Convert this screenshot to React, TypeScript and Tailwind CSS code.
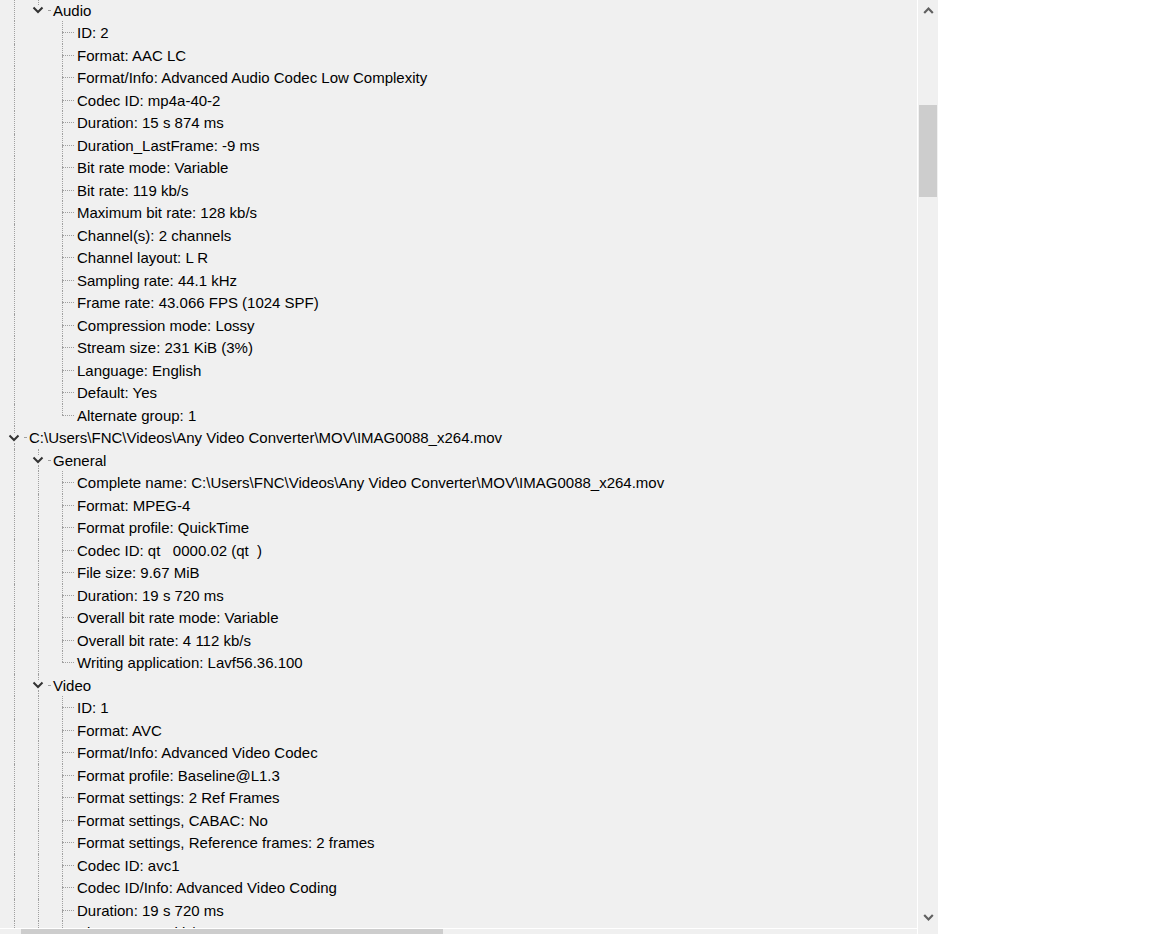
import React from 'react'

type Row = {
  text: string
  guides: boolean[]
  node?: boolean
  last?: boolean
}

const audioLeaves = [
  'ID: 2',
  'Format: AAC LC',
  'Format/Info: Advanced Audio Codec Low Complexity',
  'Codec ID: mp4a-40-2',
  'Duration: 15 s 874 ms',
  'Duration_LastFrame: -9 ms',
  'Bit rate mode: Variable',
  'Bit rate: 119 kb/s',
  'Maximum bit rate: 128 kb/s',
  'Channel(s): 2 channels',
  'Channel layout: L R',
  'Sampling rate: 44.1 kHz',
  'Frame rate: 43.066 FPS (1024 SPF)',
  'Compression mode: Lossy',
  'Stream size: 231 KiB (3%)',
  'Language: English',
  'Default: Yes',
  'Alternate group: 1',
]

const generalLeaves = [
  'Complete name: C:\\Users\\FNC\\Videos\\Any Video Converter\\MOV\\IMAG0088_x264.mov',
  'Format: MPEG-4',
  'Format profile: QuickTime',
  'Codec ID: qt   0000.02 (qt  )',
  'File size: 9.67 MiB',
  'Duration: 19 s 720 ms',
  'Overall bit rate mode: Variable',
  'Overall bit rate: 4 112 kb/s',
  'Writing application: Lavf56.36.100',
]

const videoLeaves = [
  'ID: 1',
  'Format: AVC',
  'Format/Info: Advanced Video Codec',
  'Format profile: Baseline@L1.3',
  'Format settings: 2 Ref Frames',
  'Format settings, CABAC: No',
  'Format settings, Reference frames: 2 frames',
  'Codec ID: avc1',
  'Codec ID/Info: Advanced Video Coding',
  'Duration: 19 s 720 ms',
  'Bit rate: 1 000 kb/s',
]

const rows: Row[] = [
  { text: 'Audio', guides: [true], node: true, last: true },
  ...audioLeaves.map((t, i) => ({ text: t, guides: [true, false], last: i === audioLeaves.length - 1 })),
  { text: 'C:\\Users\\FNC\\Videos\\Any Video Converter\\MOV\\IMAG0088_x264.mov', guides: [], node: true },
  { text: 'General', guides: [true], node: true },
  ...generalLeaves.map((t, i) => ({ text: t, guides: [true, true], last: i === generalLeaves.length - 1 })),
  { text: 'Video', guides: [true], node: true },
  ...videoLeaves.map(t => ({ text: t, guides: [true, true] })),
]

const dot = 'border-dotted border-[#a0a0a0]'

function Chevron() {
  return (
    <svg width="12" height="8" viewBox="0 0 12 8" className="ml-[6px] shrink-0">
      <polyline points="1.5,1.5 6,6 10.5,1.5" fill="none" stroke="#333333" strokeWidth="2" />
    </svg>
  )
}

function Connector({ node, last }: { node?: boolean; last?: boolean }) {
  if (node) {
    return (
      <div className="w-[24px] h-full flex flex-col shrink-0">
        <div className={`flex-1 w-[13px] border-r ${dot}`} />
        <div className="h-[10px] flex items-center">
          <Chevron />
          <div className={`ml-[4px] w-[2px] h-px border-t ${dot}`} />
        </div>
        <div className={`flex-1 w-[13px] ${last ? '' : `border-r ${dot}`}`} />
      </div>
    )
  }
  return (
    <div className="w-[24px] h-full flex flex-col shrink-0">
      <div className={`flex-1 w-[13px] border-r ${dot}`} />
      <div className={`h-px ml-[12px] w-[12px] border-t ${dot}`} />
      <div className={`flex-1 w-[13px] ${last ? '' : `border-r ${dot}`}`} />
    </div>
  )
}

function TreeRow({ row }: { row: Row }) {
  return (
    <div className="h-[22.5px] flex items-center">
      {row.guides.map((g, i) => (
        <div key={i} className="w-[24px] h-full shrink-0">
          {g && <div className={`w-[13px] h-full border-r ${dot}`} />}
        </div>
      ))}
      <Connector node={row.node} last={row.last} />
      <span className="ml-[3px] whitespace-pre text-[15px] leading-[17px] text-black">{row.text}</span>
    </div>
  )
}

export default function App() {
  return (
    <div className="w-[1152px] h-[934px] bg-white flex overflow-hidden font-['Liberation_Sans',Arial,sans-serif]">
      <div className="w-[917px] h-full flex flex-col shrink-0">
        <div className="h-[928px] bg-[#f0f0f0] overflow-hidden pl-[2px]">
          <div className="mt-[-1.25px]">
            {rows.map((r, i) => (
              <TreeRow key={i} row={r} />
            ))}
          </div>
        </div>
        <div className="h-px bg-white" />
        <div className="flex-1 bg-[#f0f0f0] pl-[21px]">
          <div className="w-[422px] h-full bg-[#cdcdcd]" />
        </div>
      </div>
      <div className="w-px h-full bg-white" />
      <div className="w-[20px] h-full bg-[#f0f0f0] flex flex-col items-center">
        <div className="h-[21px] flex items-center justify-center">
          <svg width="11" height="7" viewBox="0 0 11 7">
            <polyline points="1.2,6 5.5,1.6 9.8,6" fill="none" stroke="#606060" strokeWidth="2.2" />
          </svg>
        </div>
        <div className="h-[84px]" />
        <div className="w-[18px] h-[92px] bg-[#cdcdcd]" />
        <div className="flex-1" />
        <div className="h-[21px] flex items-center justify-center mb-[6px]">
          <svg width="11" height="7" viewBox="0 0 11 7">
            <polyline points="1.2,1 5.5,5.4 9.8,1" fill="none" stroke="#606060" strokeWidth="2.2" />
          </svg>
        </div>
      </div>
    </div>
  )
}
